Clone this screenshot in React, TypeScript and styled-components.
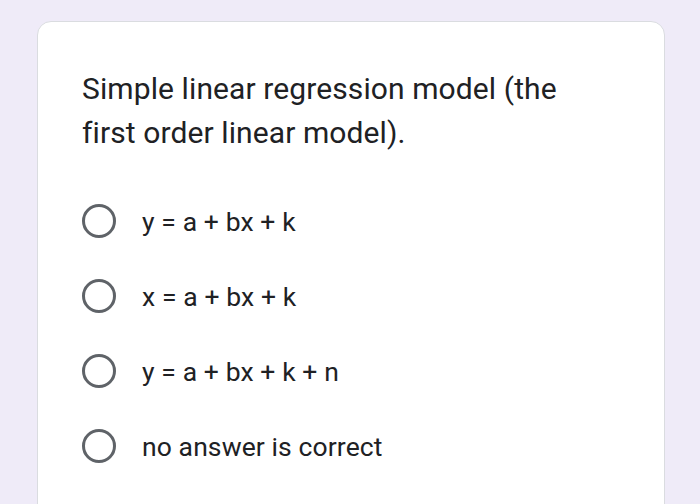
import styled, { createGlobalStyle } from "styled-components";

// -----------------GLOBAL-----------------//
const GlobalStyle = createGlobalStyle`
  html, body {
    margin: 0;
    padding: 0;
    background: #efebf8;
    font-family: Roboto, "Noto Sans", Arial, sans-serif;
  }
`;

// -----------------STYLES-----------------//
const Page = styled.div`
  width: 700px;
  height: 504px;
  overflow: hidden;
  padding: 21px 35px 0 37px;
  box-sizing: border-box;
`;

const Card = styled.div`
  background: #ffffff;
  border: 1.5px solid #dadce0;
  border-radius: 14px;
  height: 520px;
  padding: 45px 44px 0 44px;
  box-sizing: border-box;
`;

const Question = styled.div`
  color: #202124;
  font-size: 30px;
  line-height: 44px;
  letter-spacing: 0.1px;
`;

const Options = styled.div`
  margin-top: 49px;
  display: flex;
  flex-direction: column;
  gap: 41px;
`;

const Option = styled.label`
  display: flex;
  align-items: center;
  height: 34px;
  cursor: pointer;
`;

const Radio = styled.span`
  width: 34px;
  height: 34px;
  box-sizing: border-box;
  border: 3.5px solid #5f6368;
  border-radius: 50%;
  flex-shrink: 0;
`;

const OptionText = styled.span`
  margin-left: 26px;
  color: #202124;
  font-size: 26.5px;
  letter-spacing: 0.1px;
`;

// -----------------COMPONENT-----------------//
const answers = ["y = a + bx + k", "x = a + bx + k", "y = a + bx + k + n", "no answer is correct"];

function App() {
  return (
    <>
      <GlobalStyle />
      <Page>
        <Card>
          <Question>
            Simple linear regression model (the
            <br />
            first order linear model).
          </Question>
          <Options>
            {answers.map((a) => (
              <Option key={a}>
                <Radio />
                <OptionText>{a}</OptionText>
              </Option>
            ))}
          </Options>
        </Card>
      </Page>
    </>
  );
}

export default App
